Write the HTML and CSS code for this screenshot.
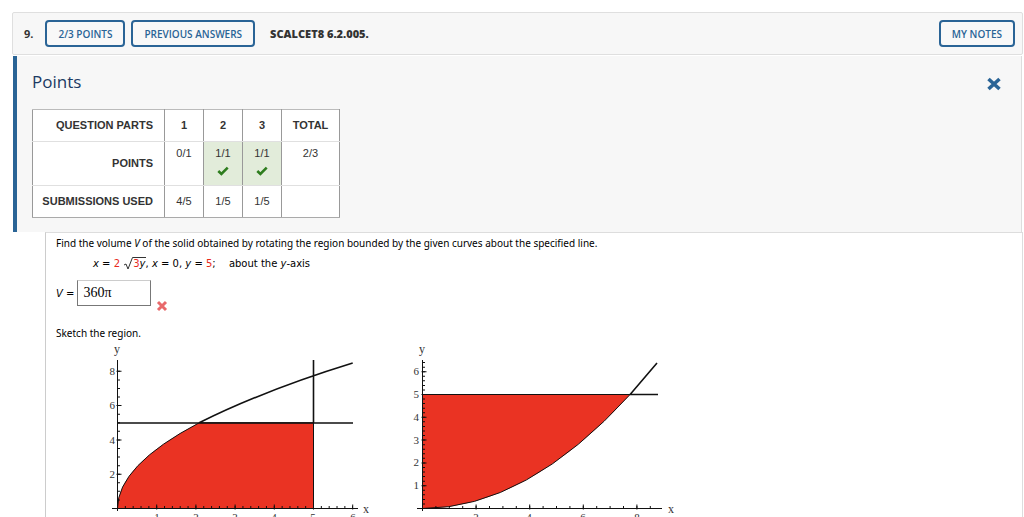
FILE: index.html
```html
<!DOCTYPE html>
<html lang="en">
<head>
    <meta charset="UTF-8">
    <meta name="viewport" content="width=device-width, initial-scale=1.0">
    <title>SCALCET8 6.2.005</title>
    <link rel="stylesheet" href="styles.css">
</head>
<body>
    <header class="question-bar">
        <span class="number">9.</span>
        <button type="button" class="btn">2/3 POINTS</button>
        <button type="button" class="btn">PREVIOUS ANSWERS</button>
        <strong class="question-name">SCALCET8 6.2.005.</strong>
        <button type="button" class="btn notes">MY NOTES</button>
    </header>

    <section class="points-panel">
        <div class="panel-head">
            <h2>Points</h2>
            <button type="button" class="close" aria-label="Close">
                <svg width="14" height="14" viewBox="0 0 14 14"><path d="M1.5 2L12.5 12M12.5 2L1.5 12" stroke="#2a6496" stroke-width="3.6"/></svg>
            </button>
        </div>
        <table class="points-table">
            <tr>
                <th class="row-head">QUESTION PARTS</th>
                <th class="part">1</th>
                <th class="part">2</th>
                <th class="part">3</th>
                <th class="total">TOTAL</th>
            </tr>
            <tr class="scores">
                <th class="row-head">POINTS</th>
                <td>0/1</td>
                <td class="correct">1/1
                    <svg class="check" width="12" height="10" viewBox="0 0 12 10"><path d="M1.3 5L4.4 8L10.7 1.6" fill="none" stroke="#2e7d1e" stroke-width="2.6"/></svg>
                </td>
                <td class="correct">1/1
                    <svg class="check" width="12" height="10" viewBox="0 0 12 10"><path d="M1.3 5L4.4 8L10.7 1.6" fill="none" stroke="#2e7d1e" stroke-width="2.6"/></svg>
                </td>
                <td>2/3</td>
            </tr>
            <tr>
                <th class="row-head">SUBMISSIONS USED</th>
                <td>4/5</td>
                <td>1/5</td>
                <td>1/5</td>
                <td></td>
            </tr>
        </table>
    </section>

    <main class="question">
        <p>Find the volume <i>V</i> of the solid obtained by rotating the region bounded by the given curves about the specified line.</p>
        <p class="equation"><i>x</i> = <span class="value">2</span> <svg class="root" width="10" height="13" viewBox="0 0 10 13"><path d="M1 8L3 7L5 12L9.5 .5H10" fill="none" stroke="#333" stroke-width="1"/></svg><span class="radicand"><span class="value">3</span><i>y</i></span>, <i>x</i> = 0, <i>y</i> = <span class="value">5</span>; <span class="about">about the <i>y</i>-axis</span></p>
        <div class="answer">
            <label for="volume"><i>V</i> =</label>
            <input type="text" id="volume" value="360π">
            <svg class="wrong" width="12" height="12" viewBox="0 0 12 12"><path d="M2 2L10 10M10 2L2 10" stroke="#e8696b" stroke-width="3"/></svg>
        </div>
        <p>Sketch the region.</p>

        <div class="plots">
            <svg class="plot" width="280" height="190" viewBox="0 0 280 190">
                <path class="region" d="M17.5 168.5Q17.5 125.6 99.2 82.8H213.5V168.5Z"/>
                <path class="curve" d="M99.2 82.8Q164.4 50.2 252.7 23M17.5 83H253M213.5 20V83"/>
                <path class="axis" d="M17.5 20V171M12 168.5H258"/>
                <!-- minor and major ticks -->
                <path class="tick-y" stroke-dasharray="1 7.575" d="M18.5 169V24"/>
                <path class="tick-y long" stroke-dasharray="1 33.3" d="M19 169V24"/>
                <path class="tick-x" stroke-dasharray="1 6.84" d="M17 167.5H253"/>
                <path class="tick-x long" stroke-dasharray="1 38.2" d="M17 167H253.2"/>
                <text x="14" y="13" class="name">y</text>
                <text x="263" y="173" class="name">x</text>
                <g class="left">
                    <text x="15" y="35">8</text>
                    <text x="15" y="69">6</text>
                    <text x="15" y="104">4</text>
                    <text x="15" y="138">2</text>
                </g>
                <g class="bottom">
                    <text x="57" y="181">1</text>
                    <text x="96" y="181">2</text>
                    <text x="135" y="181">3</text>
                    <text x="174" y="181">4</text>
                    <text x="213" y="181">5</text>
                    <text x="253" y="181">6</text>
                </g>
            </svg>
            <svg class="plot" width="280" height="190" viewBox="0 0 280 190">
                <path class="region" d="M17.5 168.5Q121.3 168.5 225.1 54.5H17.5Z"/>
                <path class="curve" d="M225.1 54.5L252 23M225 54.5H253"/>
                <path class="axis" d="M17.5 20V171M12 168.5H257"/>
                <path class="tick-y" stroke-dasharray="1 3.56" d="M18.5 169V22"/>
                <path class="tick-y long" stroke-dasharray="1 21.8" d="M19 169V22"/>
                <path class="tick-x" stroke-dasharray="1 12.4" d="M17 167.5H252"/>
                <path class="tick-x long" stroke-dasharray="1 52.6" d="M17 167H252"/>
                <text x="14" y="13" class="name">y</text>
                <text x="263" y="173" class="name">x</text>
                <g class="left">
                    <text x="14" y="35">6</text>
                    <text x="14" y="58">5</text>
                    <text x="14" y="81">4</text>
                    <text x="14" y="104">3</text>
                    <text x="14" y="126">2</text>
                    <text x="14" y="149">1</text>
                </g>
                <g class="bottom">
                    <text x="71" y="181">2</text>
                    <text x="124" y="181">4</text>
                    <text x="178" y="181">6</text>
                    <text x="232" y="181">8</text>
                </g>
            </svg>
        </div>
    </main>
</body>
</html>
```

FILE: styles.css
```css
body {
    height: 100vh;
    margin: 0;
    padding: 12px 1px 0 12px;
    box-sizing: border-box;
    overflow: hidden;
    background-color: #fff;
    font-family: "Open Sans", sans-serif;
    color: #333;
}
.question-bar {
    display: flex;
    align-items: center;
    height: 41px;
    padding: 0 7px 0 11px;
    border: 1px solid #dfdfdf;
    border-radius: 2px;
    background-color: #f7f7f7;
    font-size: 11px;
    font-weight: bold;
}
.number {
    margin-right: 12px;
}
.btn {
    height: 27px;
    margin-right: 6px;
    padding: 0 11px;
    border: 2px solid #2a6496;
    border-radius: 4px;
    background-color: #f8f8f8;
    color: #2a6496;
    font-family: "Open Sans", sans-serif;
    font-size: 10px;
    font-weight: 600;
    cursor: pointer;
}
.question-name {
    margin-left: 9px;
}
.notes {
    margin-left: auto;
    margin-right: 0;
}
.points-panel {
    margin: 1px 1px 0 1px;
    padding: 14px 20px 14px 15px;
    border-left: 4px solid #2a6496;
    border-right: 1px solid #ddd;
    background-color: #f7f7f7;
}
.panel-head {
    display: flex;
    justify-content: space-between;
    align-items: flex-end;
    margin-bottom: 14px;
}
h2 {
    margin: 0;
    color: #1b3a63;
    font-size: 17px;
    font-weight: normal;
    line-height: 24px;
    padding-bottom: 1px;
}
.close {
    display: flex;
    padding: 0 0 4px;
    border: none;
    background: none;
    cursor: pointer;
}
.points-table {
    border-collapse: collapse;
    border: 1px solid #aaa;
    background-color: #fff;
    font-family: "Liberation Sans", Arial, sans-serif;
    font-size: 11px;
    line-height: 13px;
    text-align: center;
}
.points-table th,
.points-table td {
    padding: 9px 0;
    border: 1px solid #e0e0e0;
    border-left-color: #999;
    border-right-color: #999;
}
.points-table tr:first-child th {
    border-top-color: #bbb;
}
.points-table tr:last-child th,
.points-table tr:last-child td {
    border-bottom-color: #aaa;
}
.points-table .row-head {
    width: 120px;
    padding-right: 11px;
    text-align: right;
}
.part {
    width: 38px;
}
.total {
    width: 57px;
}
.points-table .scores td {
    padding: 5px 0 6px;
    vertical-align: top;
}
.points-table .correct {
    background-color: #e2ecda;
}
.check {
    display: block;
    margin: 6px auto 3px;
}
.question {
    margin-left: 33px;
    padding: 4px 10px;
    border: 1px solid #ccc;
    border-top-color: #ddd;
    border-right-color: #ddd;
    font-family: "Noto Sans", sans-serif;
    font-size: 10px;
    line-height: 13px;
    color: #000;
}
.question p {
    margin: 0;
}
.question .equation {
    margin: 7px 0 10px 37px;
}
.equation,
.answer {
    font-family: Verdana, "DejaVu Sans", sans-serif;
}
.value {
    color: #e8291c;
}
.root {
    vertical-align: -3px;
}
.radicand {
    border-top: 1px solid #333;
}
.about {
    margin-left: 10px;
}
.answer {
    display: flex;
    align-items: center;
    margin-bottom: 21px;
}
.answer input {
    width: 74px;
    height: 26px;
    margin: 0 5px 0 3px;
    padding: 0 5px;
    box-sizing: border-box;
    border: 1px solid #777;
    border-top-color: #ccc;
    font-family: "Liberation Serif", serif;
    font-size: 14px;
}
.wrong {
    align-self: flex-end;
    margin-bottom: -6px;
}
.plots {
    display: flex;
    gap: 25px;
    margin-left: 44px;
}
.plot {
    flex: none;
    fill: none;
    stroke: #111;
}
.region {
    fill: #ea3323;
    stroke-width: 1;
}
.curve {
    stroke-width: 1.6;
}
.tick-y,
.tick-x {
    stroke-width: 3;
}
.long {
    stroke-width: 5;
}
.plot text {
    fill: #333;
    stroke: none;
    font-family: "Liberation Serif", serif;
    font-size: 11px;
}
.plot .name {
    font-size: 12px;
}
.left {
    text-anchor: end;
}
.bottom {
    text-anchor: middle;
}
```
